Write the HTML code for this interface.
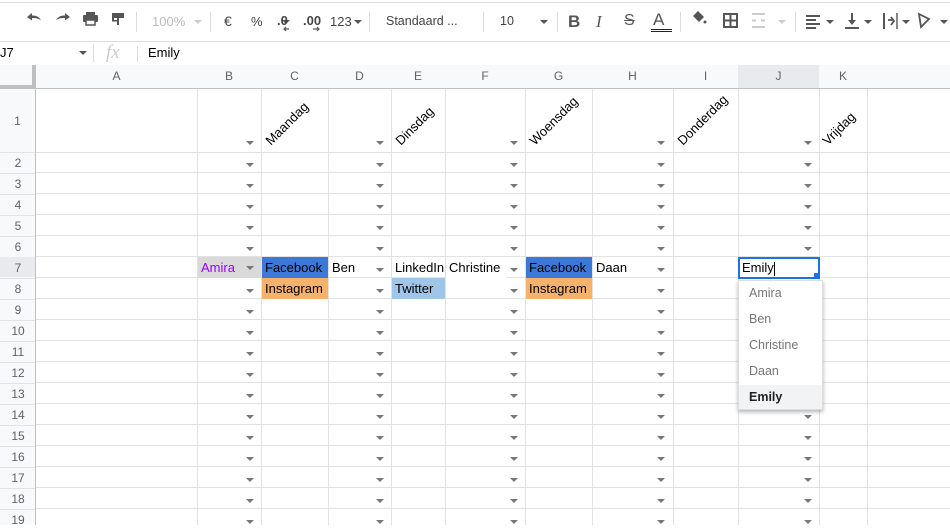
<!DOCTYPE html>
<html><head><meta charset="utf-8">
<style>
*{margin:0;padding:0;box-sizing:border-box}
body{width:950px;height:525px;overflow:hidden;background:#fff;font-family:"Liberation Sans",Arial,sans-serif;position:relative;font-size:13px;color:#222}
.a{position:absolute}
.tb{color:#444;font-size:13px}
.hd{position:absolute;top:65px;height:24px;background:#f8f9fa;border-right:1px solid #c0c0c0;border-bottom:1px solid #c0c0c0;color:#5f6368;font-size:12px;text-align:center;line-height:23px}
.rn{position:absolute;left:0;width:36px;background:#f8f9fa;border-right:1px solid #c0c0c0;color:#5f6368;font-size:12px;text-align:center}
.rot{position:absolute;transform-origin:0 100%;transform:rotate(-45deg);font-size:13px;color:#000;white-space:nowrap}
.cell{position:absolute;height:21px;line-height:21px;padding-left:3px;font-size:13px;color:#000}
.dd{position:absolute;left:749px;color:#777;font-size:12.5px}
</style></head><body>
<!-- toolbar -->
<div class="a" style="left:0;top:2px;width:950px;height:1px;background:#dadce0"></div>
<div class="a" style="left:0;top:41px;width:950px;height:1px;background:#dadce0"></div>
<svg class="a" style="left:0;top:0" width="950" height="42">
<g fill="#555">
<path d="M27 17 l5 -4 v2.5 c4 0 7 1 9 5 c-2 -2 -5 -2.5 -9 -2.5 v2.5z"/>
<path d="M70 17 l-5 -4 v2.5 c-4 0 -7 1 -9 5 c2 -2 5 -2.5 9 -2.5 v2.5z"/>
<rect x="83" y="15" width="15" height="7" rx="1"/><rect x="86" y="12" width="9" height="3"/><rect x="86" y="20" width="9" height="5" fill="#fff" stroke="#555" stroke-width="1.5"/>
<rect x="112" y="13" width="12" height="5"/><rect x="117" y="18" width="2" height="7"/><rect x="112" y="18" width="2" height="3"/><rect x="112" y="20" width="7" height="1.5"/>
</g>
<g fill="#ccc"><path d="M194 20 l4 4 l4 -4z"/></g>
<rect x="136" y="12" width="1" height="20" fill="#dadce0"/>
<rect x="210" y="12" width="1" height="20" fill="#dadce0"/>
<rect x="369" y="12" width="1" height="20" fill="#dadce0"/>
<rect x="483" y="12" width="1" height="20" fill="#dadce0"/>
<rect x="557" y="12" width="1" height="20" fill="#dadce0"/>
<rect x="680" y="12" width="1" height="20" fill="#dadce0"/>
<rect x="795" y="12" width="1" height="20" fill="#dadce0"/>
<g fill="#555"><path d="M282 20 l4 4 l4 -4z"/><path d="M354 20 l4 4 l4 -4z"/><path d="M540 20 l4 4 l4 -4z"/></g>
<path d="M284 29 h5 M286 27 l-2 2 l2 2" stroke="#555" stroke-width="1.2" fill="none"/>
<path d="M313 29 h6 M317 27 l2 2 l-2 2" stroke="#555" stroke-width="1.2" fill="none"/>
<rect x="651" y="29" width="21" height="1" fill="#222"/><rect x="651" y="31" width="21" height="1" fill="#222"/>
<g stroke="#555" stroke-width="2" fill="none"><rect x="724" y="14" width="13" height="13"/><path d="M730.5 14 v13 M724 20.5 h13"/></g>
<g stroke="#ccc" stroke-width="2" fill="none"><path d="M752 14 h13 M752 27 h13 M752 20.5 h4 M761 20.5 h4"/></g>
<path d="M778 20 l4 4 l4 -4z" fill="#ccc"/>
<path d="M693 16 l5 -5 l6 6 l-5 5z" fill="#555"/><circle cx="705" cy="22" r="1.5" fill="#555"/>
<g fill="#555"><rect x="806" y="15" width="14" height="2"/><rect x="806" y="19" width="10" height="2"/><rect x="806" y="23" width="14" height="2"/><rect x="806" y="27" width="10" height="2"/>
<path d="M826 20 l4 4 l4 -4z"/>
<rect x="845" y="27" width="14" height="2"/><rect x="851" y="13" width="2" height="10"/><path d="M848 20 h8 l-4 5z"/><path d="M864 20 l4 4 l4 -4z"/>
<rect x="883" y="13" width="2" height="16"/><path d="M888 20 h6 M891 17 l3 4 l-3 4" stroke="#555" stroke-width="1.8" fill="none"/><rect x="896" y="13" width="2" height="16" fill="#888"/><path d="M902 20 l4 4 l4 -4z"/>
<path d="M919 14 l10 5 l-8 8z" fill="none" stroke="#555" stroke-width="1.8"/><path d="M940 20 l4 4 l4 -4z"/></g>
</svg>
<div class="a tb" style="left:152px;top:14px;color:#bbb">100%</div>
<div class="a tb" style="left:224px;top:13px;font-size:14px">€</div>
<div class="a tb" style="left:251px;top:14px">%</div>
<div class="a tb" style="left:277px;top:13px;font-weight:bold">.0</div>
<div class="a tb" style="left:303px;top:13px;font-weight:bold">.00</div>
<div class="a tb" style="left:330px;top:14px">123</div>
<div class="a tb" style="left:386px;top:14px;font-size:12.5px">Standaard ...</div>
<div class="a tb" style="left:500px;top:14px;font-size:12.5px">10</div>
<div class="a tb" style="left:568px;top:12px;font-size:17px;font-weight:bold;color:#555">B</div>
<div class="a tb" style="left:596px;top:12px;font-size:17px;font-style:italic;color:#555;font-family:'Liberation Serif',serif">I</div>
<div class="a tb" style="left:624px;top:12px;font-size:16px;color:#555;text-decoration:line-through">S</div>
<div class="a tb" style="left:653px;top:10px;font-size:17px;color:#555">A</div>
<!-- formula bar -->
<div class="a" style="left:0;top:65px;width:950px;height:1px;background:#dadce0"></div>
<div class="a" style="left:0;top:45px;font-size:13px;color:#000">J7</div>
<svg class="a" style="left:78px;top:50px" width="10" height="6"><path d="M1 1 l4 4 l4 -4z" fill="#555"/></svg>
<div class="a" style="left:93px;top:44px;width:1px;height:18px;background:#dadce0"></div>
<div class="a" style="left:106px;top:42px;font-family:'Liberation Serif',serif;font-style:italic;font-size:19px;color:#ccc">fx</div>
<div class="a" style="left:137px;top:46px;width:1px;height:16px;background:#dadce0"></div>
<div class="a" style="left:148px;top:45px;font-size:13px;color:#000">Emily</div>
<!-- column headers -->
<div class="hd" style="left:0;width:36px;border-right:4px solid #c0c0c0;border-bottom:4px solid #c0c0c0"></div>
<div class="hd" style="left:36px;width:162px">A</div>
<div class="hd" style="left:197px;width:65px">B</div>
<div class="hd" style="left:261px;width:68px">C</div>
<div class="hd" style="left:328px;width:64px">D</div>
<div class="hd" style="left:391px;width:55px">E</div>
<div class="hd" style="left:445px;width:81px">F</div>
<div class="hd" style="left:525px;width:68px">G</div>
<div class="hd" style="left:592px;width:82px">H</div>
<div class="hd" style="left:673px;width:66px">I</div>
<div class="hd" style="left:738px;width:82px;background:#e8eaed">J</div>
<div class="hd" style="left:819px;width:49px">K</div>
<div class="hd" style="left:867px;width:83px;border-right:none"></div>
<!-- grid -->
<svg class="a" style="left:0;top:89px" width="950" height="436">
<defs>
<pattern id="h" x="0" y="0" width="950" height="21" patternUnits="userSpaceOnUse"><rect x="0" y="20" width="950" height="1" fill="#e2e2e2"/></pattern>
<pattern id="ar" x="0" y="64" width="950" height="21" patternUnits="userSpaceOnUse"><g fill="#777"><path d="M246 10 l4 4 l4 -4z"/><path d="M376 10 l4 4 l4 -4z"/><path d="M510 10 l4 4 l4 -4z"/><path d="M657 10 l4 4 l4 -4z"/><path d="M804 10 l4 4 l4 -4z"/></g></pattern>
</defs>
<rect x="0" y="64" width="950" height="372" fill="url(#h)"/>
<rect x="0" y="63" width="950" height="1" fill="#e2e2e2"/>
<g fill="#e2e2e2">
<rect x="197" y="0" width="1" height="436"/><rect x="261" y="0" width="1" height="436"/><rect x="328" y="0" width="1" height="436"/><rect x="391" y="0" width="1" height="436"/><rect x="445" y="0" width="1" height="436"/><rect x="525" y="0" width="1" height="436"/><rect x="592" y="0" width="1" height="436"/><rect x="673" y="0" width="1" height="436"/><rect x="738" y="0" width="1" height="436"/><rect x="819" y="0" width="1" height="436"/><rect x="867" y="0" width="1" height="436"/>
</g>
<g fill="#777"><path d="M246 52 l4 4 l4 -4z"/><path d="M376 52 l4 4 l4 -4z"/><path d="M510 52 l4 4 l4 -4z"/><path d="M657 52 l4 4 l4 -4z"/><path d="M804 52 l4 4 l4 -4z"/></g>
<rect x="0" y="64" width="950" height="372" fill="url(#ar)"/>
</svg>
<!-- row headers -->
<div class="rn" style="top:89px;height:64px;line-height:64px;border-bottom:1px solid #e2e2e2">1</div>
<div class="a" style="left:0;top:153px;width:36px;height:372px;background:#f8f9fa;border-right:1px solid #c0c0c0;background-image:repeating-linear-gradient(to bottom,transparent 0,transparent 20px,#e2e2e2 20px,#e2e2e2 21px)"></div>
<div class="a" style="left:0;top:257px;width:36px;height:20px;background:#e8eaed;border-right:1px solid #c0c0c0"></div>
<div class="a" style="left:0;top:153px;width:36px;font-size:12px;color:#5f6368;text-align:center;line-height:21px">2<br>3<br>4<br>5<br>6<br>7<br>8<br>9<br>10<br>11<br>12<br>13<br>14<br>15<br>16<br>17<br>18<br>19</div>
<!-- rotated headers -->
<div class="rot" style="left:273px;top:133px">Maandag</div>
<div class="rot" style="left:403px;top:133px">Dinsdag</div>
<div class="rot" style="left:537px;top:133px">Woensdag</div>
<div class="rot" style="left:685px;top:133px">Donderdag</div>
<div class="rot" style="left:830px;top:133px">Vrijdag</div>
<!-- data cells -->
<div class="cell" style="left:198px;top:257px;width:63px;height:21px;background:#d9d9d9;color:#9900ff">Amira</div>
<svg class="a" style="left:246px;top:266px" width="9" height="5"><path d="M0 0 l4 4 l4 -4z" fill="#777"/></svg>
<div class="cell" style="left:262px;top:257px;width:66px;height:21px;background:#3c78d8">Facebook</div>
<div class="cell" style="left:329px;top:257px">Ben</div>
<div class="cell" style="left:392px;top:257px">LinkedIn</div>
<div class="cell" style="left:446px;top:257px;background:#fff;width:60px">Christine</div>
<div class="cell" style="left:526px;top:257px;width:66px;height:21px;background:#3c78d8">Facebook</div>
<div class="cell" style="left:593px;top:257px">Daan</div>
<div class="cell" style="left:262px;top:278px;width:66px;height:21px;background:#f6b26b">Instagram</div>
<div class="cell" style="left:392px;top:278px;width:53px;height:21px;background:#9fc5e8">Twitter</div>
<div class="cell" style="left:526px;top:278px;width:66px;height:21px;background:#f6b26b">Instagram</div>
<!-- editing cell -->
<div class="a" style="left:738px;top:257px;width:82px;height:22px;border:2px solid #1a73e8;background:#fff;padding-left:2px;line-height:18px;font-size:13px;color:#000">Emily<span style="display:inline-block;width:1px;height:14px;background:#000;vertical-align:middle"></span></div>
<div class="a" style="left:814px;top:273px;width:6px;height:6px;background:#1a73e8"></div>
<!-- dropdown -->
<div class="a" style="left:738px;top:280px;width:85px;height:130px;background:#fff;box-shadow:0 2px 4px rgba(0,0,0,.3);border:1px solid #ddd">
<div class="a" style="left:0;top:104px;width:83px;height:24px;background:#f1f3f4"></div>
</div>
<div class="dd" style="top:286px">Amira</div>
<div class="dd" style="top:312px">Ben</div>
<div class="dd" style="top:338px">Christine</div>
<div class="dd" style="top:364px">Daan</div>
<div class="dd" style="top:390px;color:#222;font-weight:bold">Emily</div>
</body></html>
